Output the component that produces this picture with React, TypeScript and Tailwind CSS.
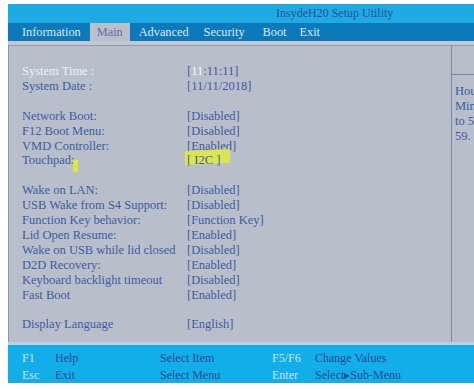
import React from 'react';

type Row = { label: string; value: string } | null;

const rows: Row[] = [
  { label: 'System Date :', value: '[11/11/2018]' },
  null,
  { label: 'Network Boot:', value: '[Disabled]' },
  { label: 'F12 Boot Menu:', value: '[Disabled]' },
  { label: 'VMD Controller:', value: '[Enabled]' },
  { label: 'Touchpad:', value: '[ I2C ]' },
  null,
  { label: 'Wake on LAN:', value: '[Disabled]' },
  { label: 'USB Wake from S4 Support:', value: '[Disabled]' },
  { label: 'Function Key behavior:', value: '[Function Key]' },
  { label: 'Lid Open Resume:', value: '[Enabled]' },
  { label: 'Wake on USB while lid closed', value: '[Disabled]' },
  { label: 'D2D Recovery:', value: '[Enabled]' },
  { label: 'Keyboard backlight timeout', value: '[Disabled]' },
  { label: 'Fast Boot', value: '[Enabled]' },
  null,
  { label: 'Display Language', value: '[English]' },
];

const tabs = [
  { name: 'Information', cls: 'ml-[14px]' },
  { name: 'Main', cls: 'ml-[9px] px-[7px] bg-[#b9c0cc] text-[#5d6f98]' },
  { name: 'Advanced', cls: 'ml-[9px]' },
  { name: 'Security', cls: 'ml-[15px]' },
  { name: 'Boot', cls: 'ml-[18px]' },
  { name: 'Exit', cls: 'ml-[13px]' },
];

const keys = [
  ['F1', 'Help', 'Select Item', 'F5/F6', 'Change Values'],
  ['Esc', 'Exit', 'Select Menu', 'Enter', 'Select\u25B8Sub-Menu'],
];

export default function App() {
  return (
    <div className="w-[474px] h-[389px] overflow-hidden bg-white pt-[4px] pl-[8px] font-['Liberation_Serif',serif]">
      <div className="w-[640px]">
        {/* title */}
        <div className="h-[19px] bg-[#1eabe4] text-[12px] leading-[19px] text-[#2c4f94] pl-[268px]">
          InsydeH20 Setup Utility
        </div>

        {/* menu */}
        <div className="h-[18px] bg-[#0b79ba] flex items-stretch text-[12.3px] leading-[18px] text-[#dfe7f2]">
          {tabs.map((t) => (
            <span key={t.name} className={t.cls}>
              {t.name}
            </span>
          ))}
        </div>

        {/* body */}
        <div className="border-t-[4px] border-[#c3c9d3]">
          <div className="border-t border-[#8f99b0] bg-[#b8bfcb] h-[297px] flex">
            <div className="w-[444px] border-l border-[#8a95ad] border-r border-r-[#7b86a4] pl-[13px] pt-[18px] text-[12.5px] leading-[14.9px] text-[#3c5ba2]">
              <div className="grid grid-cols-[165px_1fr]">
                <span className="text-[#eef1f6]">System Time :</span>
                <span>
                  [<span className="text-[#f4f6fa]">11</span>:11:11]
                </span>
              </div>
              {rows.map((r, i) =>
                r ? (
                  <div key={i} className="grid grid-cols-[165px_1fr]">
                    <span className="relative">
                      {r.label}
                      {r.label === 'Touchpad:' && (
                        <span className="absolute left-[51px] top-[7px] w-[5px] h-[12px] bg-[#e2ec2a] opacity-90" />
                      )}
                    </span>
                    <span className="relative">
                      {r.label === 'Touchpad:' && (
                        <span className="absolute -left-[2px] -top-[3px] w-[45px] h-[14px] bg-[#e0ea3c] opacity-85 -rotate-3" />
                      )}
                      <span className="relative">{r.value}</span>
                    </span>
                  </div>
                ) : (
                  <div key={i} className="h-[14.9px]" />
                )
              )}
            </div>

            <div className="flex-1 text-[12.5px] text-[#3c5ba2]">
              <div className="h-[29px] border-b border-[#7b86a4]" />
              <div className="pl-[3px] pt-[9px] leading-[15px] whitespace-nowrap">
                <div>Hour from 0 to 23,</div>
                <div>Minute from 0</div>
                <div>to 59, Second from 0 to</div>
                <div>59.</div>
              </div>
            </div>
          </div>
        </div>

        {/* footer */}
        <div className="border-t-[3px] border-[#c6ccd8]">
          <div className="h-[38px] bg-[#12aeea] pt-[5px] text-[12px] leading-[17px]">
            {keys.map((k, i) => (
              <div key={i} className="flex pl-[14px]">
                <span className="w-[33px] text-[#cfe0f2]">{k[0]}</span>
                <span className="w-[105px] text-[#264a92]">{k[1]}</span>
                <span className="w-[112px] text-[#264a92]">{k[2]}</span>
                <span className="w-[43px] text-[#cfe0f2]">{k[3]}</span>
                <span className="text-[#264a92]">{k[4]}</span>
              </div>
            ))}
          </div>
        </div>
      </div>
    </div>
  );
}
